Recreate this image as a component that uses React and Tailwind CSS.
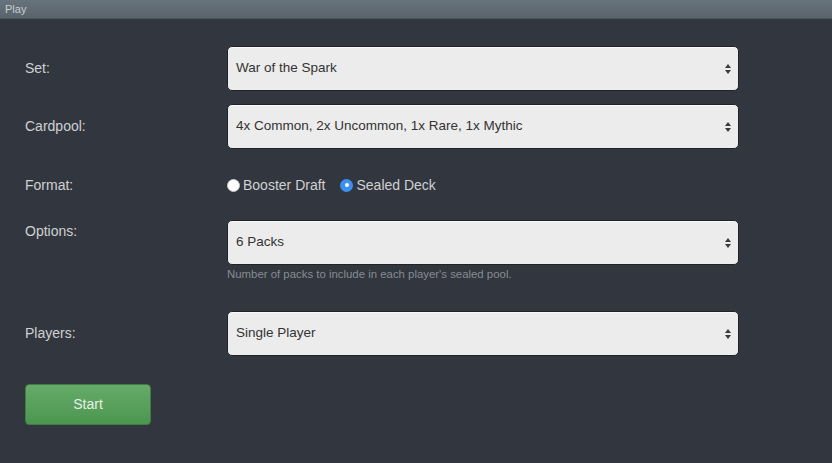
import { useState } from 'react'

// Play screen – set/cardpool/format picker for a draft app
const FONT = { fontFamily: '"Liberation Sans", Arial, sans-serif' }

function Arrows() {
  return (
    <svg width="8" height="12" viewBox="0 0 8 12" className="shrink-0">
      <path d="M4 1 L7 5 L1 5 Z" fill="#3a3a3a" />
      <path d="M4 11 L7 7 L1 7 Z" fill="#3a3a3a" />
    </svg>
  )
}

function Select({ value }) {
  return (
    <div className="w-[512px] h-[45px] rounded-[5px] border border-[#1f2328] bg-[#ececec] flex items-center justify-between pl-[8px] pr-[6px] shadow-[inset_0_1px_0_#fafafa]">
      <span className="text-[13.5px] text-[#333]">{value}</span>
      <Arrows />
    </div>
  )
}

function Radio({ checked, label }) {
  return (
    <label className="flex items-center gap-[3px]">
      {checked ? (
        <span className="w-[13px] h-[13px] rounded-full bg-[#3c8ff3] flex items-center justify-center">
          <span className="w-[4px] h-[4px] rounded-full bg-white" />
        </span>
      ) : (
        <span className="w-[13px] h-[13px] rounded-full bg-white border border-[#c8c8c8]" />
      )}
      <span className="text-[14px] text-[#cfd1d3]">{label}</span>
    </label>
  )
}

function Row({ label, children, className = '', top = false }) {
  return (
    <div className={`flex ${top ? 'items-start' : 'items-center'} ${className}`}>
      <div className={`w-[202px] text-[14px] text-[#cfd1d3] ${top ? 'pt-[2px] leading-[18px]' : ''}`}>{label}</div>
      <div>{children}</div>
    </div>
  )
}

export default function App() {
  const [format] = useState('sealed')

  return (
    <div className="w-[832px] h-[463px] bg-[#32363e] flex flex-col overflow-hidden" style={FONT}>
      <div className="h-[19px] bg-gradient-to-b from-[#68747d] to-[#58636a] flex items-center px-[5px] border-b border-[#4c555b]">
        <span className="text-[11px] text-[#c9ced2]">Play</span>
      </div>

      <div className="pl-[25px] pt-[27px] flex flex-col">
        <Row label="Set:">
          <Select value="War of the Spark" />
        </Row>
        <Row label="Cardpool:" className="mt-[13px]">
          <Select value="4x Common, 2x Uncommon, 1x Rare, 1x Mythic" />
        </Row>
        <Row label="Format:" className="mt-[14px] h-[44px]">
          <div className="flex items-center gap-[15px]">
            <Radio checked={format === 'draft'} label="Booster Draft" />
            <Radio checked={format === 'sealed'} label="Sealed Deck" />
          </div>
        </Row>
        <Row label="Options:" className="mt-[13px]" top>
          <Select value="6 Packs" />
          <div className="mt-[2px] text-[11.4px] leading-[14px] text-[#868c94]">
            Number of packs to include in each player's sealed pool.
          </div>
        </Row>
        <Row label="Players:" className="mt-[30px]">
          <Select value="Single Player" />
        </Row>

        <button className="mt-[28px] w-[126px] h-[41px] rounded-[4px] border border-[#3f7d43] bg-gradient-to-b from-[#66ab69] to-[#4c9650] text-[14px] text-[#e6efe6]">
          Start
        </button>
      </div>
    </div>
  )
}
